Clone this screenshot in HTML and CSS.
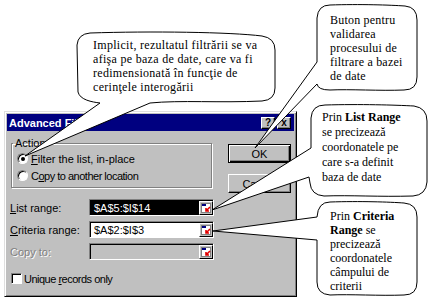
FILE: index.html
```html
<!DOCTYPE html>
<html>
<head>
<meta charset="utf-8">
<link rel="stylesheet" href="styles.css">
</head>
<body>
<div class="dialog">
  <div class="titlebar">
    <span class="title">Advanced Filter</span>
    <span class="tbtns"><span class="tb">?</span><span class="tb">x</span></span>
  </div>
  <div class="content">
    <div class="left">
      <fieldset class="group">
        <legend>Action</legend>
        <div class="opt"><span class="radio on"></span><span><u>F</u>ilter the list, in-place</span></div>
        <div class="opt"><span class="radio"></span><span class="tight">C<u>o</u>py to another location</span></div>
      </fieldset>
      <div class="row">
        <span class="label"><u>L</u>ist range:</span>
        <span class="field"><span class="val sel">$A$5:$I$14</span><span class="pick"><svg width="11" height="11" viewBox="0 0 11 11"><rect x="0.5" y="0.5" width="9" height="9" fill="#fff" stroke="#808080"/><rect x="1" y="1" width="4" height="2" fill="#000080"/><path d="M9 4 L5 8 M5 5 L5 8 L8 8" stroke="#e00000" stroke-width="1.6" fill="none"/></svg></span></span>
      </div>
      <div class="row">
        <span class="label"><u>C</u>riteria range:</span>
        <span class="field"><span class="val">$A$2:$I$3</span><span class="pick"><svg width="11" height="11" viewBox="0 0 11 11"><rect x="0.5" y="0.5" width="9" height="9" fill="#fff" stroke="#808080"/><rect x="1" y="1" width="4" height="2" fill="#000080"/><path d="M9 4 L5 8 M5 5 L5 8 L8 8" stroke="#e00000" stroke-width="1.6" fill="none"/></svg></span></span>
      </div>
      <div class="row">
        <span class="label dis">Copy to:</span>
        <span class="field off"><span class="val"></span><span class="pick"><svg width="11" height="11" viewBox="0 0 11 11"><rect x="0.5" y="0.5" width="9" height="9" fill="#fff" stroke="#808080"/><rect x="1" y="1" width="4" height="2" fill="#000080"/><path d="M9 4 L5 8 M5 5 L5 8 L8 8" stroke="#e00000" stroke-width="1.6" fill="none"/></svg></span></span>
      </div>
      <div class="check"><span class="box"></span><span class="tight">Unique <u>r</u>ecords only</span></div>
    </div>
    <div class="right">
      <div class="btn def">OK</div>
      <div class="btn">Cancel</div>
    </div>
  </div>
</div>

<svg class="callouts" width="429" height="302" viewBox="0 0 429 302">
  <path d="M90 33 C150 31 230 32 262 36 Q275 38 275 50 L275 88 Q275 100 262 101 C220 103 180 100 150 103 L25 156 L100 103 C92 102 80 100 78 92 L77 45 Q78 34 90 33 Z"/>
  <path d="M330 5 C360 4 390 5 405 6 Q417 7 417 20 L417 77 Q417 90 404 90 C380 91 350 89 330 90 Q318 90 317 84 L255 148 L317 62 L317 18 Q318 5 330 5 Z"/>
  <path d="M325 105 C360 104 395 105 414 106 Q427 108 427 121 L427 182 Q426 195 413 196 C380 197 350 195 324 196 Q311 195 310 183 L309 177 L212 210 L311 148 L311 118 Q312 105 325 105 Z"/>
  <path d="M330 202 C360 201 390 202 404 203 Q417 204 417 217 L417 282 Q417 295 404 295 C380 296 350 294 330 295 Q317 294 317 282 L317 240 L213 231 L317 217 Q318 202 330 202 Z"/>
</svg>

<div class="note n1">Implicit, rezultatul filtrării se va<br>afişa pe baza de date, care va fi<br>redimensionată în funcţie de<br>cerinţele interogării</div>
<div class="note n2">Buton pentru<br>validarea<br>procesului de<br>filtrare a bazei<br>de date</div>
<div class="note n3">Prin <b>List Range</b><br>se precizează<br>coordonatele pe<br>care s-a definit<br>baza de date</div>
<div class="note n4">Prin <b>Criteria</b><br><b>Range</b> se<br>precizează<br>coordonatele<br>câmpului de<br>criterii</div>
</body>
</html>
```
FILE: styles.css
```css
html, body {
  margin: 0;
  padding: 0;
}
body {
  width: 429px;
  height: 302px;
  background: #fff;
  position: relative;
  overflow: hidden;
  font-family: "Liberation Sans", Arial, sans-serif;
  font-size: 11px;
  color: #000;
}
.dialog {
  margin: 111px 0 0 4px;
  width: 293px;
  height: 186px;
  box-sizing: border-box;
  background: #c0c0c0;
  border: 1px solid;
  border-color: #dfdfdf #000 #000 #dfdfdf;
  box-shadow: inset 1px 1px 0 #fff, inset -1px -1px 0 #808080;
  padding: 2px;
}
.titlebar {
  height: 17px;
  background: #000080;
  color: #fff;
  display: flex;
  align-items: center;
  justify-content: space-between;
  padding: 0 3px 0 2px;
  font-weight: bold;
}
.tbtns {
  display: flex;
  gap: 2px;
}
.tb {
  width: 14px;
  height: 12px;
  box-sizing: border-box;
  background: #c0c0c0;
  color: #000;
  border: 1px solid;
  border-color: #fff #000 #000 #fff;
  box-shadow: inset -1px -1px 0 #808080;
  font-size: 10px;
  line-height: 10px;
  text-align: center;
  font-weight: bold;
}
.content {
  display: flex;
  padding: 6px 0 0 3px;
}
.left {
  width: 204px;
}
.group {
  margin: 0 1px;
  width: 201px;
  box-sizing: border-box;
  padding: 0 0 3px 1px;
  border: 1px solid #808080;
  box-shadow: 1px 1px 0 #fff, inset 1px 1px 0 #fff;
  min-width: 0;
}
.group legend {
  padding: 0 2px;
  line-height: 13px;
}
.opt {
  display: flex;
  align-items: center;
  height: 17px;
}
.tight {
  letter-spacing: -0.5px;
}
.radio {
  width: 11px;
  height: 11px;
  box-sizing: border-box;
  border-radius: 50%;
  background: #fff;
  border: 1px solid;
  border-color: #808080 #fff #fff #808080;
  box-shadow: inset 1px 1px 0 #000;
  margin: 0 3px 0 4px;
  display: flex;
  align-items: center;
  justify-content: center;
}
.radio.on::after {
  content: "";
  width: 4px;
  height: 4px;
  border-radius: 50%;
  background: #000;
}
.row {
  display: flex;
  align-items: center;
  height: 17px;
  margin-top: 5px;
}
.group + .row {
  margin-top: 11px;
}
.label {
  width: 79px;
}
.label.dis {
  color: #808080;
  text-shadow: 1px 1px 0 #fff;
}
.field {
  width: 125px;
  height: 17px;
  box-sizing: border-box;
  display: flex;
  background: #fff;
  border: 1px solid;
  border-color: #808080 #fff #fff #808080;
  box-shadow: inset 1px 1px 0 #000;
  padding: 1px 0 0 1px;
}
.field.off {
  background: #c0c0c0;
}
.val {
  flex: 1;
  padding-left: 3px;
  line-height: 14px;
}
.val.sel {
  background: #000;
  color: #fff;
}
.pick {
  width: 14px;
  height: 14px;
  box-sizing: border-box;
  background: #c0c0c0;
  border: 1px solid;
  border-color: #fff #000 #000 #fff;
  display: flex;
  align-items: center;
  justify-content: center;
}
.check {
  display: flex;
  align-items: center;
  height: 17px;
  margin-top: 10px;
}
.box {
  width: 11px;
  height: 11px;
  box-sizing: border-box;
  background: #fff;
  border: 1px solid;
  border-color: #808080 #fff #fff #808080;
  box-shadow: inset 1px 1px 0 #000;
  margin: 0 2px 0 1px;
}
.right {
  margin: 7px 0 0 14px;
  width: 63px;
}
.btn {
  height: 19px;
  box-sizing: border-box;
  border: 1px solid;
  border-color: #fff #000 #000 #fff;
  box-shadow: inset -1px -1px 0 #808080;
  display: flex;
  align-items: center;
  justify-content: center;
  margin-bottom: 11px;
}
.btn.def {
  border-color: #000;
  box-shadow: inset 1px 1px 0 #fff, inset -1px -1px 0 #000, inset -2px -2px 0 #808080;
}
.callouts {
  position: absolute;
  left: 0;
  top: 0;
}
.callouts path {
  fill: #fff;
  stroke: #000;
  stroke-width: 1;
}
.note {
  position: absolute;
  font-family: "Liberation Serif", "Times New Roman", serif;
  font-size: 12px;
  line-height: 14px;
  white-space: nowrap;
  color: #000;
}
.n1 { left: 93px; top: 38px; letter-spacing: 0.3px; }
.n2 { left: 330px; top: 13px; letter-spacing: 0.2px; }
.n3 { left: 322px; top: 110px; line-height: 15px; }
.n4 { left: 330px; top: 209px; }
```
